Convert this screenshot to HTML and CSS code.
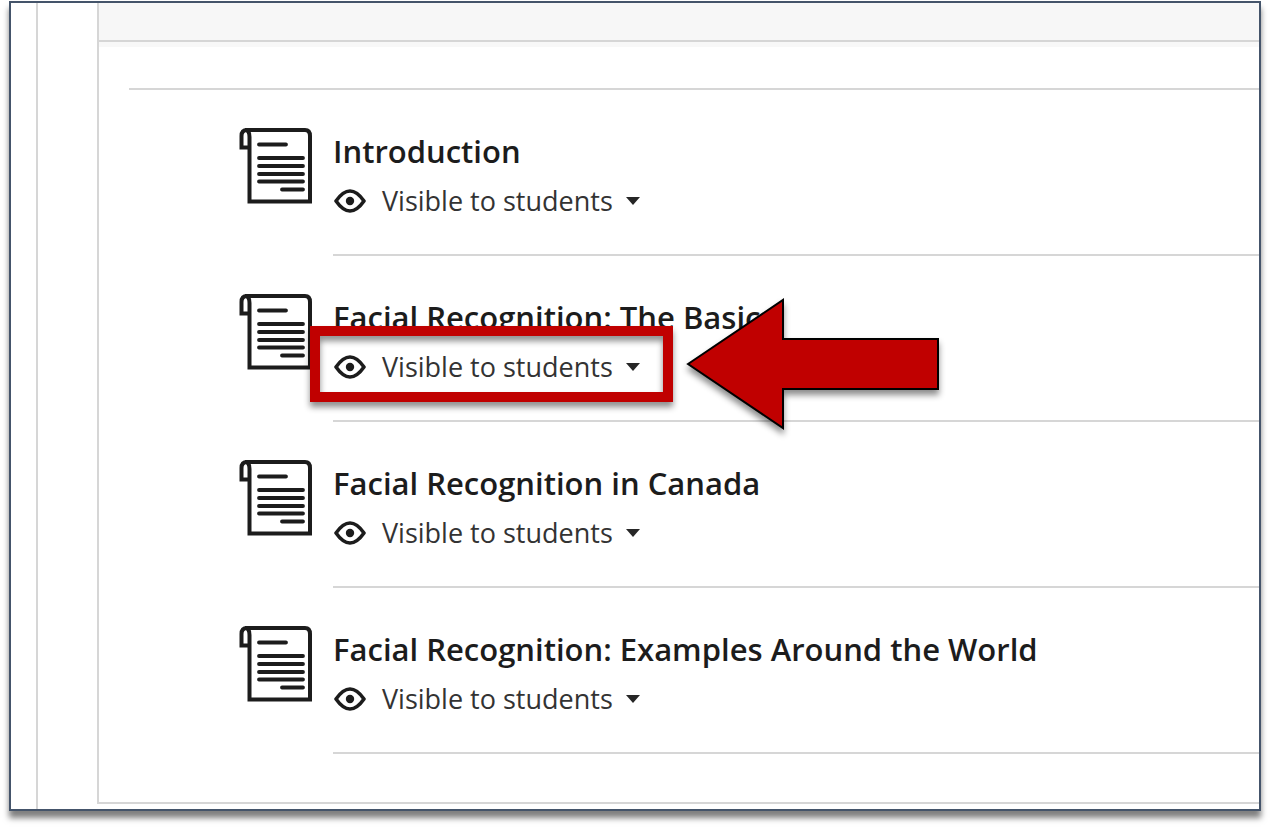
FILE: index.html
```html
<!DOCTYPE html>
<html lang="en">
<head>
<meta charset="utf-8">
<title>Course content</title>
<link rel="stylesheet" href="styles.css">
</head>
<body>
<svg class="symbols" aria-hidden="true">
  <symbol id="document" viewBox="0 0 74 76">
    <path d="M10.500 19.500H2.500V8Q2.500 2 8 2H66Q71 2 71 8V73.500H10.500V9Q10.500 2 6 2" fill="none" stroke="#1c1c1c" stroke-width="4"/>
    <path d="M20 16.500H47M20 30H64M20 38H64M20 46H64M20 53.500H64M43 61.500H64" fill="none" stroke="#1c1c1c" stroke-width="3.800" stroke-linecap="round"/>
  </symbol>
  <symbol id="eye" viewBox="0 0 32 24">
    <path d="M2 12Q9 2 16 2T30 12Q23 22 16 22T2 12Z" fill="none" stroke="#1c1c1c" stroke-width="3.600" stroke-linejoin="round"/>
    <circle cx="16" cy="12" r="4.200" fill="#1c1c1c"/>
  </symbol>
  <symbol id="caret" viewBox="0 0 14 8">
    <path d="M0 0H14L7 8Z" fill="#262626"/>
  </symbol>
</svg>
<main class="frame">
  <section class="panel">
    <div class="panel-head"></div>
    <ul class="items">
      <li class="item">
        <svg class="doc-icon" aria-hidden="true"><use href="#document"/></svg>
        <div class="details">
          <h2 class="title">Introduction</h2>
          <button class="status" type="button"><svg class="eye" aria-hidden="true"><use href="#eye"/></svg><span>Visible to students</span><svg class="caret" aria-hidden="true"><use href="#caret"/></svg></button>
        </div>
      </li>
      <li class="item">
        <svg class="doc-icon" aria-hidden="true"><use href="#document"/></svg>
        <div class="details">
          <h2 class="title">Facial Recognition: The Basics</h2>
          <button class="status" type="button"><svg class="eye" aria-hidden="true"><use href="#eye"/></svg><span>Visible to students</span><svg class="caret" aria-hidden="true"><use href="#caret"/></svg></button>
          <div class="callout"></div>
          <svg class="arrow" viewBox="0 0 256 136" aria-hidden="true"><path d="M3 67L98 3V42H253V92H98V131Z" fill="#c00000" stroke="#000" stroke-width="2"/></svg>
        </div>
      </li>
      <li class="item">
        <svg class="doc-icon" aria-hidden="true"><use href="#document"/></svg>
        <div class="details">
          <h2 class="title">Facial Recognition in Canada</h2>
          <button class="status" type="button"><svg class="eye" aria-hidden="true"><use href="#eye"/></svg><span>Visible to students</span><svg class="caret" aria-hidden="true"><use href="#caret"/></svg></button>
        </div>
      </li>
      <li class="item">
        <svg class="doc-icon" aria-hidden="true"><use href="#document"/></svg>
        <div class="details">
          <h2 class="title">Facial Recognition: Examples Around the World</h2>
          <button class="status" type="button"><svg class="eye" aria-hidden="true"><use href="#eye"/></svg><span>Visible to students</span><svg class="caret" aria-hidden="true"><use href="#caret"/></svg></button>
        </div>
      </li>
    </ul>
  </section>
</main>
</body>
</html>
```
FILE: styles.css
```css
* {
  box-sizing: border-box;
}

body {
  margin: 0;
  padding: 1px 9px 17px;
  background: #fff;
  color: #1c1c1c;
  font-family: "Open Sans", "Noto Sans", sans-serif;
}

.symbols {
  position: absolute;
  width: 0;
  height: 0;
}

.frame {
  display: flex;
  min-height: calc(100vh - 18px);
  padding-left: 25px;
  border: 2px solid #44546a;
  background: #fff;
  box-shadow: 0 7px 6px rgba(0, 0, 0, 0.5);
}

.panel {
  flex: 1;
  border-left: 2px solid #d6d6d6;
  padding: 0 0 5px 59px;
}

.panel-head {
  height: 44px;
  border-left: 2px solid #d6d6d6;
  background: linear-gradient(#f7f7f7 37px, #d6d6d6 37px, #d6d6d6 39px, #f8f8f8 39px);
}

.items {
  margin: 0;
  padding: 41px 0 48px 30px;
  border-left: 2px solid #d6d6d6;
  border-bottom: 2px solid #d6d6d6;
  list-style: none;
}

.item {
  display: flex;
  gap: 20px;
  padding-left: 110px;
}

.item:first-child {
  border-top: 2px solid #d6d6d6;
}

.doc-icon {
  flex: none;
  width: 74px;
  height: 76px;
  margin-top: 38px;
}

.details {
  position: relative;
  flex: 1;
  display: flex;
  flex-direction: column;
  align-items: flex-start;
  gap: 10px;
  padding: 41px 0 33px;
  border-bottom: 2px solid #d6d6d6;
}

.title {
  margin: 0;
  font-size: 31px;
  font-weight: 600;
  line-height: 40px;
}

.status {
  display: flex;
  align-items: center;
  padding: 0 0 0 1px;
  border: 0;
  background: none;
  color: #333;
  font: 400 27px/40px "Open Sans", "Noto Sans", sans-serif;
}

.eye {
  width: 32px;
  height: 24px;
  margin-right: 16px;
}

.caret {
  width: 14px;
  height: 8px;
  margin-left: 13px;
}

.callout {
  position: absolute;
  top: 70px;
  left: -23px;
  width: 363px;
  height: 76px;
  border: 10px solid #c00000;
  filter: drop-shadow(0 5px 3px rgba(0, 0, 0, 0.45));
}

.arrow {
  position: absolute;
  top: 41px;
  left: 352px;
  width: 256px;
  height: 136px;
  overflow: visible;
  filter: drop-shadow(0 5px 3px rgba(0, 0, 0, 0.45));
}
```
